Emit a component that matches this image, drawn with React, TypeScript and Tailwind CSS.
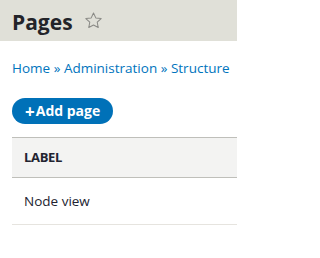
const font = { fontFamily: '"Open Sans", "Liberation Sans", sans-serif' };

function StarIcon() {
  return (
    <svg width="19" height="19" viewBox="0 0 24 24" fill="none" stroke="#8a8a86" strokeWidth="1.3" strokeLinejoin="round">
      <path d="M12 2.5l2.9 6.2 6.8.8-5 4.7 1.3 6.7L12 17.6l-6 3.3 1.3-6.7-5-4.7 6.8-.8z" />
    </svg>
  );
}

export default function App() {
  return (
    <div className="w-[237px] h-[258px] overflow-hidden bg-white text-[#222330]" style={font}>
      {/* Page title band */}
      <div className="h-[41px] bg-[#e0e0d8] flex items-center gap-[11px] pl-[12px]">
        <h1 className="text-[21px] font-bold leading-none text-[#232429] pt-[3px]">Pages</h1>
        <StarIcon />
      </div>

      {/* Breadcrumb */}
      <nav className="pl-[12px] pt-[17px] text-[13.5px] leading-[20px] text-[#0074bd] whitespace-nowrap">
        <a>Home</a> <span>»</span> <a>Administration</a> <span>»</span> <a>Structure</a>
      </nav>

      {/* Action */}
      <div className="pl-[12px] pt-[20px]">
        <button className="h-[26px] px-[13px] rounded-full bg-[#0071b8] text-white text-[14px] font-bold leading-none flex items-center">
          <span className="text-[17px] font-bold mr-[1px]">+</span>Add page
        </button>
      </div>

      {/* Table */}
      <div className="ml-[12px] mt-[13px] w-[240px]">
        <div className="h-[41px] bg-[#f3f3f2] border-t border-b border-[#bfbfba] flex items-center pl-[12px] text-[13px] font-bold uppercase tracking-tight text-[#222330]">
          Label
        </div>
        <div className="h-[47px] border-b border-[#e6e4df] flex items-center pl-[12px] text-[13.5px] text-[#222330]">
          Node view
        </div>
      </div>
    </div>
  );
}
